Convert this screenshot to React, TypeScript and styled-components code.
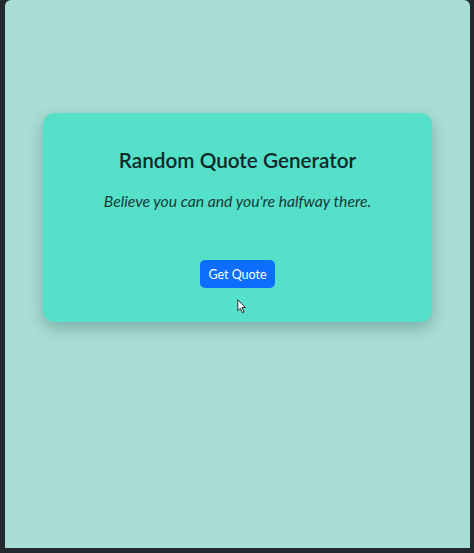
import React from "react";
import styled, { createGlobalStyle } from "styled-components";

const quote = "Believe you can and you're halfway there.";

const App: React.FC = () => {
  return (
    <>
      <GlobalStyle />
      <Frame>
        <Page>
          <Card>
            <Title>Random Quote Generator</Title>
            <Quote>{quote}</Quote>
            <ButtonWrap>
              <QuoteButton>Get Quote</QuoteButton>
              <Pointer width="10" height="15" viewBox="0 0 12 18">
                <path
                  d="M1 1 L1 14 L4 11 L6.5 16.5 L8.5 15.6 L6 10.2 L10 10.2 Z"
                  fill="#ffffff"
                  stroke="#1c1c1c"
                  strokeWidth="1.1"
                  strokeLinejoin="round"
                />
              </Pointer>
            </ButtonWrap>
          </Card>
        </Page>
      </Frame>
    </>
  );
};

export default App;

const GlobalStyle = createGlobalStyle`
  html, body {
    margin: 0;
    padding: 0;
    background: #252a2e;
  }
  * {
    box-sizing: border-box;
  }
`;

const Frame = styled.div`
  width: 474px;
  height: 553px;
  padding: 0 4px 5px 5px;
  background: #252a2e;
`;

const Page = styled.div`
  height: 100%;
  background: #a8ded6;
  border-radius: 6px 6px 0 0;
  padding: 113px 38px 0;
  font-family: Lato, "Open Sans", sans-serif;
`;

const Card = styled.div`
  display: flex;
  flex-direction: column;
  align-items: center;
  background: #55e0c9;
  border-radius: 12px;
  padding: 34px 20px 34px;
  box-shadow: 0 6px 16px rgba(40, 90, 80, 0.35);
`;

const Title = styled.h1`
  margin: 0;
  font-size: 20.7px;
  line-height: 26px;
  font-weight: 600;
  color: #10282a;
`;

const Quote = styled.p`
  margin: 16px 0 0;
  font-size: 15.7px;
  line-height: 24px;
  font-style: italic;
  color: #173a37;
`;

const ButtonWrap = styled.div`
  position: relative;
  margin-top: 47px;
`;

const QuoteButton = styled.button`
  display: block;
  height: 28px;
  padding: 0 8px;
  border: none;
  border-radius: 5px;
  background: #0d6efd;
  color: #ffffff;
  font-family: inherit;
  font-size: 12.5px;
  cursor: pointer;
`;

const Pointer = styled.svg`
  position: absolute;
  left: 37px;
  top: 39px;
`;
